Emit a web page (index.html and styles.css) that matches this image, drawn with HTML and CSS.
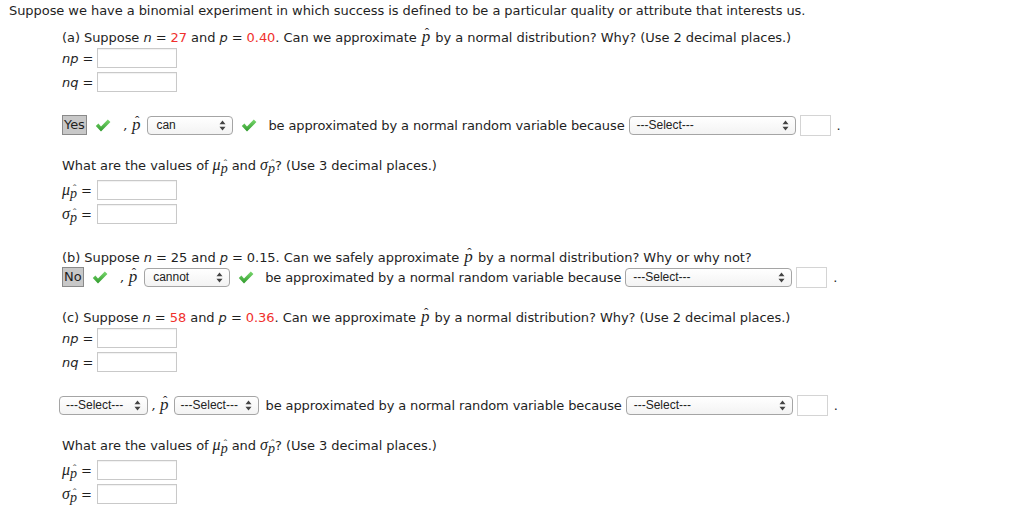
FILE: index.html
```html
<!DOCTYPE html>
<html>
<head>
<meta charset="utf-8">
<link rel="stylesheet" href="styles.css">
</head>
<body>
<div class="page">
  <p class="line intro">Suppose we have a binomial experiment in which success is defined to be a particular quality or attribute that interests us.</p>

  <div class="part">
    <p class="line q-a">(a) Suppose <i class="v">n</i> = <span class="red">27</span> and <i class="v">p</i> = <span class="red">0.40</span>. Can we approximate <span class="phat">p</span> by a normal distribution? Why? (Use 2 decimal places.)</p>
    <div class="frow r-np"><span class="lbl"><i class="v">np</i> =</span><span class="box"></span></div>
    <div class="frow r-nq"><span class="lbl"><i class="v">nq</i> =</span><span class="box"></span></div>

    <div class="arow r-yes">
      <span class="ans">Yes</span>
      <svg class="chk" width="16" height="13" viewBox="0 0 16 13"><defs><linearGradient id="g1" x1="0" y1="0" x2="0" y2="1"><stop offset="0" stop-color="#7ad86e"/><stop offset="1" stop-color="#2f9a2c"/></linearGradient></defs><path d="M0.8 7 L3.4 4.6 L6 7.4 L12.8 0.6 L15.4 3 L6 12.4 Z" fill="url(#g1)"/></svg>
      <span class="comma">,</span><span class="phat">p</span>
      <span class="sel w-can"><span class="st">can</span><svg class="arr" width="7" height="11" viewBox="0 0 7 11"><path d="M3.5 0.5 L6.5 4.2 L0.5 4.2 Z M3.5 10.5 L6.5 6.8 L0.5 6.8 Z" fill="#444"/></svg></span>
      <svg class="chk" width="16" height="13" viewBox="0 0 16 13"><defs><linearGradient id="g2" x1="0" y1="0" x2="0" y2="1"><stop offset="0" stop-color="#7ad86e"/><stop offset="1" stop-color="#2f9a2c"/></linearGradient></defs><path d="M0.8 7 L3.4 4.6 L6 7.4 L12.8 0.6 L15.4 3 L6 12.4 Z" fill="url(#g2)"/></svg>
      <span class="txt t-yes">be approximated by a normal random variable because</span>
      <span class="sel w-bec"><span class="st">---Select---</span><svg class="arr" width="7" height="11" viewBox="0 0 7 11"><path d="M3.5 0.5 L6.5 4.2 L0.5 4.2 Z M3.5 10.5 L6.5 6.8 L0.5 6.8 Z" fill="#444"/></svg></span>
      <span class="sbox"></span><span class="dot">.</span>
    </div>

    <p class="line q-what">What are the values of <span class="mu">μ<span class="sub"><span class="phat sm">p</span></span></span> and <span class="mu">σ<span class="sub"><span class="phat sm">p</span></span></span>? (Use 3 decimal places.)</p>
    <div class="frow r-mu"><span class="lbl"><span class="mu">μ<span class="sub"><span class="phat sm">p</span></span></span> =</span><span class="box"></span></div>
    <div class="frow r-sig"><span class="lbl"><span class="mu">σ<span class="sub"><span class="phat sm">p</span></span></span> =</span><span class="box"></span></div>

    <p class="line q-b">(b) Suppose <i class="v">n</i> = 25 and <i class="v">p</i> = 0.15. Can we safely approximate <span class="phat">p</span> by a normal distribution? Why or why not?</p>
    <div class="arow r-no">
      <span class="ans">No</span>
      <svg class="chk" width="16" height="13" viewBox="0 0 16 13"><defs><linearGradient id="g3" x1="0" y1="0" x2="0" y2="1"><stop offset="0" stop-color="#7ad86e"/><stop offset="1" stop-color="#2f9a2c"/></linearGradient></defs><path d="M0.8 7 L3.4 4.6 L6 7.4 L12.8 0.6 L15.4 3 L6 12.4 Z" fill="url(#g3)"/></svg>
      <span class="comma">,</span><span class="phat">p</span>
      <span class="sel w-can"><span class="st">cannot</span><svg class="arr" width="7" height="11" viewBox="0 0 7 11"><path d="M3.5 0.5 L6.5 4.2 L0.5 4.2 Z M3.5 10.5 L6.5 6.8 L0.5 6.8 Z" fill="#444"/></svg></span>
      <svg class="chk" width="16" height="13" viewBox="0 0 16 13"><defs><linearGradient id="g4" x1="0" y1="0" x2="0" y2="1"><stop offset="0" stop-color="#7ad86e"/><stop offset="1" stop-color="#2f9a2c"/></linearGradient></defs><path d="M0.8 7 L3.4 4.6 L6 7.4 L12.8 0.6 L15.4 3 L6 12.4 Z" fill="url(#g4)"/></svg>
      <span class="txt t-yes">be approximated by a normal random variable because</span>
      <span class="sel w-bec"><span class="st">---Select---</span><svg class="arr" width="7" height="11" viewBox="0 0 7 11"><path d="M3.5 0.5 L6.5 4.2 L0.5 4.2 Z M3.5 10.5 L6.5 6.8 L0.5 6.8 Z" fill="#444"/></svg></span>
      <span class="sbox"></span><span class="dot">.</span>
    </div>

    <p class="line q-c">(c) Suppose <i class="v">n</i> = <span class="red">58</span> and <i class="v">p</i> = <span class="red">0.36</span>. Can we approximate <span class="phat">p</span> by a normal distribution? Why? (Use 2 decimal places.)</p>
    <div class="frow r-np"><span class="lbl"><i class="v">np</i> =</span><span class="box"></span></div>
    <div class="frow r-nq"><span class="lbl"><i class="v">nq</i> =</span><span class="box"></span></div>

    <div class="arow r-sel">
      <span class="sel w-s1"><span class="st">---Select---</span><svg class="arr" width="7" height="11" viewBox="0 0 7 11"><path d="M3.5 0.5 L6.5 4.2 L0.5 4.2 Z M3.5 10.5 L6.5 6.8 L0.5 6.8 Z" fill="#444"/></svg></span>
      <span class="comma c2">,</span><span class="phat">p</span>
      <span class="sel w-s2"><span class="st">---Select---</span><svg class="arr" width="7" height="11" viewBox="0 0 7 11"><path d="M3.5 0.5 L6.5 4.2 L0.5 4.2 Z M3.5 10.5 L6.5 6.8 L0.5 6.8 Z" fill="#444"/></svg></span>
      <span class="txt t-c">be approximated by a normal random variable because</span>
      <span class="sel w-bec"><span class="st">---Select---</span><svg class="arr" width="7" height="11" viewBox="0 0 7 11"><path d="M3.5 0.5 L6.5 4.2 L0.5 4.2 Z M3.5 10.5 L6.5 6.8 L0.5 6.8 Z" fill="#444"/></svg></span>
      <span class="sbox"></span><span class="dot">.</span>
    </div>

    <p class="line q-what2">What are the values of <span class="mu">μ<span class="sub"><span class="phat sm">p</span></span></span> and <span class="mu">σ<span class="sub"><span class="phat sm">p</span></span></span>? (Use 3 decimal places.)</p>
    <div class="frow r-mu"><span class="lbl"><span class="mu">μ<span class="sub"><span class="phat sm">p</span></span></span> =</span><span class="box"></span></div>
    <div class="frow r-sig"><span class="lbl"><span class="mu">σ<span class="sub"><span class="phat sm">p</span></span></span> =</span><span class="box"></span></div>
  </div>
</div>
</body>
</html>
```

FILE: styles.css
```css
html, body {
  margin: 0;
  padding: 0;
  background: #ffffff;
}
.page {
  font-family: "DejaVu Sans", Verdana, sans-serif;
  font-size: 13px;
  letter-spacing: -0.06px;
  color: #1f1f1f;
  padding: 3px 0 0 9px;
  width: 1015px;
  height: 511px;
  overflow: hidden;
}
.line {
  margin: 0;
  height: 16px;
  line-height: 16px;
  white-space: nowrap;
}
.part {
  padding-left: 53px;
}
.q-a { margin-top: 10px; }
.q-what { margin-top: 22px; }
.q-b { margin-top: 25px; }
.q-c { margin-top: 22px; }
.q-what2 { margin-top: 22px; }

.v { font-style: italic; }
.red { color: #f0302c; }

.phat {
  position: relative;
  display: inline-block;
  font-family: "Liberation Serif", "Times New Roman", serif;
  font-style: italic;
  font-size: 17px;
  line-height: 16px;
  padding: 0 1px;
  letter-spacing: 0;
}
.phat::before {
  content: "\02C6";
  position: absolute;
  left: 4px;
  top: -3px;
  font-style: normal;
  font-size: 13px;
  line-height: 13px;
}
.phat.sm {
  font-size: 14px;
  padding: 0;
}
.phat.sm::before {
  font-size: 10px;
  line-height: 10px;
  left: 3px;
  top: -2px;
}
.mu {
  font-family: "Liberation Serif", "Times New Roman", serif;
  font-style: italic;
  font-size: 16px;
  letter-spacing: 0;
}
.sub {
  position: relative;
  top: 3px;
}

.frow {
  display: flex;
  align-items: center;
  height: 20px;
}
.lbl {
  width: 35px;
  white-space: nowrap;
}
.box {
  width: 78px;
  height: 18px;
  border: 1px solid #c9c9c9;
  box-shadow: inset 0 1px 1px rgba(0,0,0,0.06);
  background: #fff;
}
.r-np { margin-top: 3px; }
.r-nq { margin-top: 4px; }
.r-mu { margin-top: 7px; }
.r-sig { margin-top: 4px; }

.arow {
  display: flex;
  align-items: center;
  height: 20px;
  white-space: nowrap;
}
.r-yes { margin-top: 23px; }
.r-no { margin-top: 2px; }
.r-sel { margin-top: 23px; margin-left: -3px; }

.ans {
  display: inline-block;
  height: 18px;
  line-height: 18px;
  padding: 0 1px;
  background: #c8c8c8;
  border: 1px solid #8a8a8a;
}
.chk {
  margin-left: 8px;
}
.comma {
  margin-left: 13px;
  margin-right: 3px;
  font-style: italic;
}
.c2 { margin-left: 4px; }
.sel {
  display: inline-flex;
  align-items: center;
  justify-content: space-between;
  box-sizing: border-box;
  height: 19px;
  border: 1px solid #a5a5a5;
  border-radius: 4px;
  background: linear-gradient(#ffffff, #f3f3f3);
  font-family: "Liberation Sans", Arial, sans-serif;
  font-size: 12px;
  letter-spacing: 0;
  color: #222;
  padding: 0 6px 0 8px;
}
.w-can { width: 86px; margin-left: 6px; }
.w-bec { width: 167px; margin-left: 4px; padding-left: 7px; }
.w-s1 { width: 89px; padding-left: 6px; }
.w-s2 { width: 85px; margin-left: 4px; padding-left: 6px; }
.arr { flex: none; }
.txt { margin-left: 11px; letter-spacing: -0.12px; }
.t-c { margin-left: 7px; }
.sbox {
  box-sizing: border-box;
  width: 31px;
  height: 21px;
  margin-left: 4px;
  border: 1px solid #d4d4d4;
  background: #fff;
}
.dot { margin-left: 6px; }
```
